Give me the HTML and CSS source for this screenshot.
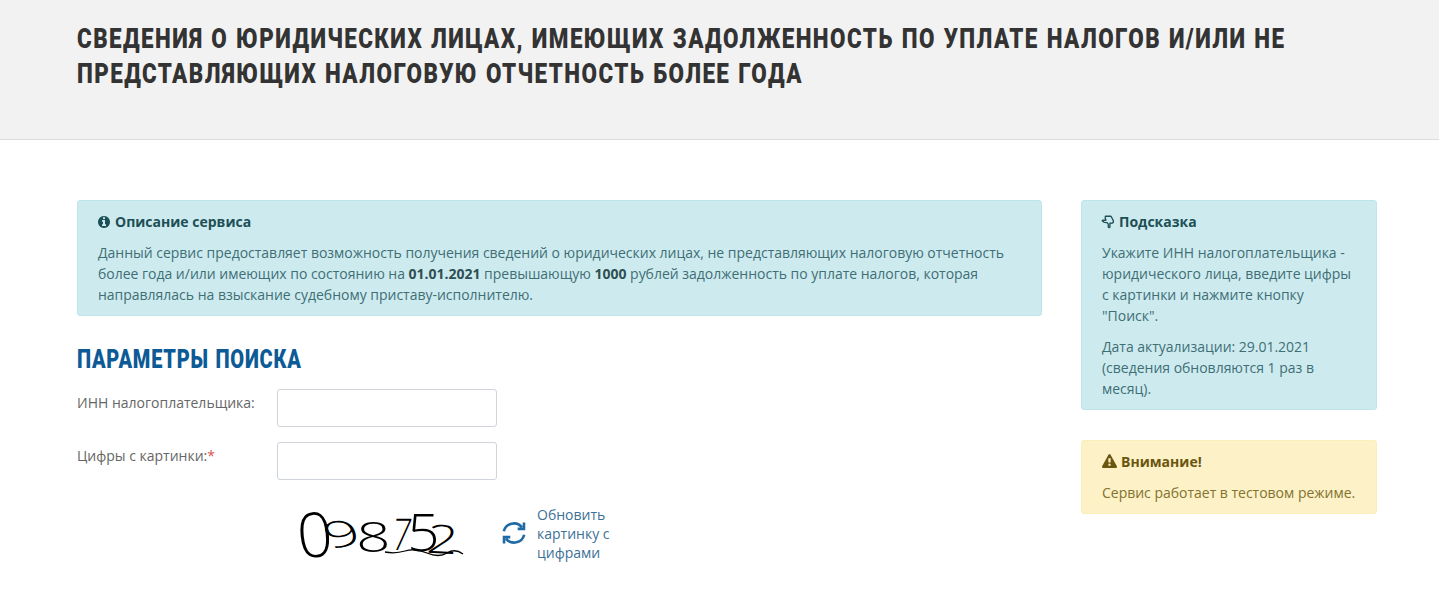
FILE: index.html
```html
<!DOCTYPE html>
<html lang="ru">
<head>
<meta charset="utf-8">
<title>Сведения о юридических лицах</title>
<link rel="stylesheet" href="styles.css">
</head>
<body>
<header class="page-head">
  <h1 class="page-title">Сведения о юридических лицах, имеющих задолженность по уплате налогов и/или не представляющих налоговую отчетность более года</h1>
</header>
<main class="layout">
  <div class="main-col">
    <section class="alert alert-info">
      <h4 class="alert-title"><svg class="ico" viewBox="0 0 1792 1792"><path d="M1152 1376v-160q0-14-9-23t-23-9h-96v-512q0-14-9-23t-23-9h-320q-14 0-23 9t-9 23v160q0 14 9 23t23 9h96v320h-96q-14 0-23 9t-9 23v160q0 14 9 23t23 9h448q14 0 23-9t9-23zm-128-896v-160q0-14-9-23t-23-9h-192q-14 0-23 9t-9 23v160q0 14 9 23t23 9h192q14 0 23-9t9-23zm640 416q0 209-103 385.5t-279.5 279.5-385.5 103-385.5-103-279.5-279.5-103-385.5 103-385.5 279.5-279.5 385.5-103 385.5 103 279.5 279.5 103 385.5z"/></svg>Описание сервиса</h4>
      <p class="alert-text">Данный сервис предоставляет возможность получения сведений о юридических лицах, не представляющих налоговую отчетность более года и/или имеющих по состоянию на <b>01.01.2021</b> превышающую <b>1000</b> рублей задолженность по уплате налогов, которая направлялась на взыскание судебному приставу-исполнителю.</p>
    </section>
    <h2 class="section-title">Параметры поиска</h2>
    <form class="search-form">
      <div class="form-row">
        <label class="form-label">ИНН налогоплательщика:</label>
        <input class="form-input" type="text">
      </div>
      <div class="form-row">
        <label class="form-label">Цифры с картинки:<span class="req">*</span></label>
        <input class="form-input" type="text">
      </div>
      <div class="captcha-row">
        <div class="captcha" aria-label="captcha">
          <span class="d d0">0</span><span class="d d1">9</span><span class="d d2">8</span><span class="d d3">7</span><span class="d d4">5</span><span class="d d5">2</span>
          <svg class="captcha-noise" viewBox="0 0 224 62"><path d="M108 50q10 2 20-1t22 2 20 0 16 1"/></svg>
        </div>
        <a class="refresh" href="#">
          <svg class="refresh-ico" viewBox="0 0 24 24"><path d="M2.6 10.4A9.6 9.6 0 0 1 19.3 6.6M21.2 2.4v5.8h-5.8M21.4 13.6A9.6 9.6 0 0 1 4.7 17.4M2.8 21.6v-5.8h5.8"/></svg>
          <span class="refresh-text">Обновить картинку с цифрами</span>
        </a>
      </div>
    </form>
  </div>
  <aside class="side-col">
    <section class="alert alert-info">
      <h4 class="alert-title"><svg class="ico ico-hand" viewBox="0 0 16 16"><path d="M5 1.4h6.2l1 1.4 1.9 3.6v2.1l-1.3.7-2.6.2v4.1c0 1.3-1.9 1.3-1.9 0v-3l-1.3-1.8-3.5-.3-2.2-1.8 1.2-.8 3.1.2-.8-2.6z" fill="none" stroke="currentColor" stroke-width="1.5" stroke-linejoin="round"/></svg>Подсказка</h4>
      <p class="alert-text">Укажите ИНН налогоплательщика - юридического лица, введите цифры с картинки и нажмите кнопку "Поиск".</p>
      <p class="alert-text alert-text-next">Дата актуализации: 29.01.2021 (сведения обновляются 1 раз в месяц).</p>
    </section>
    <section class="alert alert-warning">
      <h4 class="alert-title"><svg class="ico ico-warn" viewBox="0 0 1792 1792"><path d="M1024 1375v-190q0-14-9.5-23.5t-22.5-9.5h-192q-13 0-22.5 9.5t-9.5 23.5v190q0 14 9.5 23.5t22.5 9.5h192q13 0 22.5-9.5t9.5-23.5zm-2-374l18-459q0-12-10-19-13-11-24-11h-220q-11 0-24 11-10 7-10 21l17 457q0 10 10 16.5t24 6.5h185q14 0 23.5-6.5t10.5-16.5zm-14-934l768 1408q35 63-2 126-17 29-46.5 46t-63.5 17h-1536q-34 0-63.5-17t-46.5-46q-37-63-2-126l768-1408q17-31 47-49t65-18 65 18 47 49z"/></svg>Внимание!</h4>
      <p class="alert-text">Сервис работает в тестовом режиме.</p>
    </section>
  </aside>
</main>
</body>
</html>
```
FILE: styles.css
```css
* { box-sizing: border-box; }
html, body { margin: 0; padding: 0; }
body {
  background: #fff;
  color: #555;
  font-family: "Open Sans", "Liberation Sans", sans-serif;
  font-size: 14px;
  line-height: 21px;
  height: 603px;
  overflow: hidden;
}
.page-head {
  height: 140px;
  background: #f2f2f2;
  border-bottom: 1px solid #ddd;
  padding: 21px 77px 0;
  overflow: hidden;
}
.page-title, .section-title {
  margin: 0;
  font-family: "Roboto", "Liberation Sans", sans-serif;
  font-weight: 900;
  text-transform: uppercase;
  transform-origin: left top;
  transform: scaleX(.8);
  word-spacing: 1px;
}
.page-title {
  font-size: 28px;
  line-height: 35px;
  letter-spacing: 1.8px;
  color: #333;
  width: 1550px;
}
.layout {
  display: flex;
  align-items: flex-start;
  gap: 39px;
  padding: 60px 62px 0 77px;
}
.main-col { width: 965px; flex: none; }
.side-col { width: 296px; flex: none; display: flex; flex-direction: column; gap: 30px; }
.alert {
  border: 1px solid;
  border-radius: 3px;
  padding: 10px 20px 10px;
}
.alert-info { background: #cdebef; border-color: #bee5eb; color: #3f6e75; }
.alert-warning { background: #fcf1c7; border-color: #faeeba; color: #84722f; }
.alert-title {
  margin: 0 0 10px;
  font-size: 14px;
  line-height: 21px;
  font-weight: 700;
  display: flex;
  align-items: center;
}
.alert-info .alert-title { color: #1d4f56; }
.alert-warning .alert-title { color: #6b5610; }
.ico { width: 14px; height: 14px; margin: 0 4px 0 -1px; fill: currentColor; flex: none; }
.ico-warn { width: 15px; height: 15px; margin: 0 4px 0 0; }
.alert-text { margin: 0; letter-spacing: -.015px; }
.alert-text-next { margin-top: 10px; }
.alert-text b { color: #2f4f54; }
.section-title {
  margin: 29px 0 0;
  font-size: 25px;
  line-height: 30px;
  letter-spacing: 1px;
  color: #0c5a96;
}
.search-form { margin-top: 14px; }
.form-row { display: flex; align-items: flex-start; margin-bottom: 15px; }
.form-label { width: 200px; flex: none; padding-top: 3px; color: #666; }
.req { color: #d9534f; }
.form-input {
  width: 220px;
  height: 38px;
  background: #fff;
  border: 1px solid #ced4da;
  border-radius: 3px;
}
.captcha-row { display: flex; align-items: center; margin-left: 200px; margin-top: 22px; }
.captcha {
  position: relative;
  width: 224px;
  height: 62px;
  display: flex;
  align-items: center;
  padding-left: 20px;
  color: #000;
  font-family: "Open Sans", sans-serif;
  font-weight: 300;
  line-height: 1;
}
.captcha-noise {
  position: absolute;
  left: 0;
  top: 0;
  width: 224px;
  height: 62px;
  fill: none;
  stroke: #000;
  stroke-width: 1.3;
}
.d { display: inline-block; font-size: 50px; }
.d0 { font-size: 62px; transform: rotate(-6deg); margin-right: -5px; }
.d1 { transform: scale(1.25, .72) rotate(-14deg); margin-right: 3px; }
.d2 { transform: translateY(3px) scale(1.2, .85); margin-right: 2px; }
.d3 { font-size: 46px; transform: scale(.7, .95) skewX(-10deg); margin-right: -8px; }
.d4 { font-size: 54px; transform: translateY(-2px) scale(1.05, .95); margin-right: -9px; }
.d5 { font-size: 44px; transform: translateY(5px) scale(1.25, .9) rotate(4deg); }
.refresh { display: flex; align-items: center; color: #3d7096; text-decoration: none; }
.refresh-ico { width: 26px; height: 26px; fill: none; stroke: #1d6aa5; stroke-width: 2.4; flex: none; margin-right: 10px; }
.refresh-text { width: 90px; line-height: 19px; }
```
